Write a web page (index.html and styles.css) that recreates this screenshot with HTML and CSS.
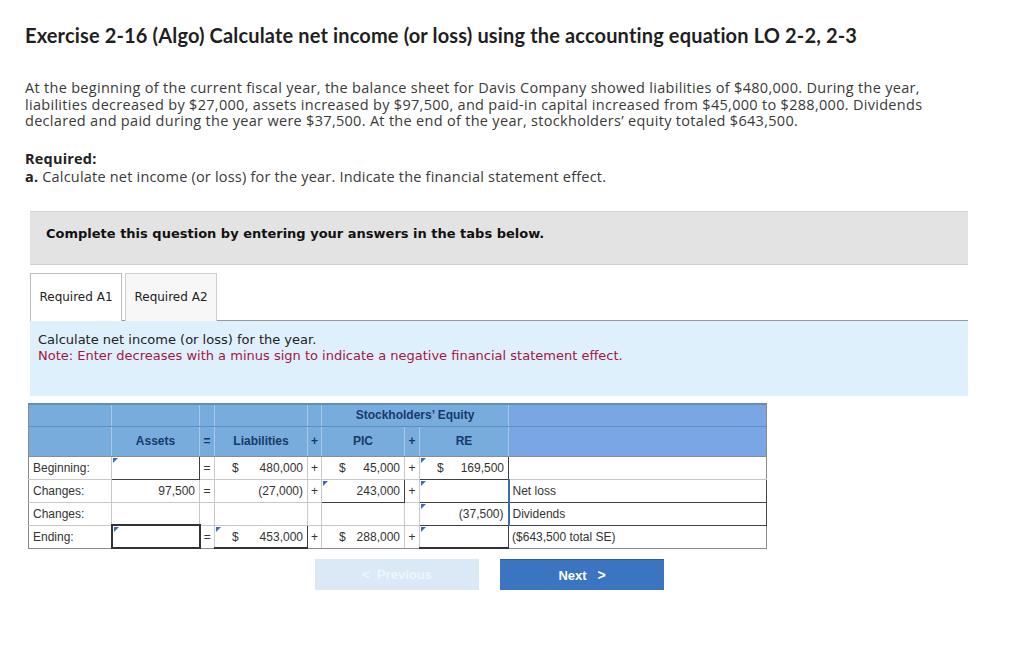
FILE: index.html
```html
<!DOCTYPE html>
<html>
<head>
<meta charset="utf-8">
<link rel="stylesheet" href="styles.css">
</head>
<body>
<div class="page">
  <h1 class="title">Exercise 2-16 (Algo) Calculate net income (or loss) using the accounting equation LO 2-2, 2-3</h1>
  <p class="intro">At the beginning of the current fiscal year, the balance sheet for Davis Company showed liabilities of $480,000. During the year,<br>liabilities decreased by $27,000, assets increased by $97,500, and paid-in capital increased from $45,000 to $288,000. Dividends<br>declared and paid during the year were $37,500. At the end of the year, stockholders’ equity totaled $643,500.</p>
  <p class="req"><b>Required:</b><br><b>a.</b> Calculate net income (or loss) for the year. Indicate the financial statement effect.</p>

  <div class="instr">Complete this question by entering your answers in the tabs below.</div>

  <div class="tabs">
    <div class="tab active">Required A1</div>
    <div class="tab">Required A2</div>
  </div>
  <div class="panel">
    <div class="panel-line">Calculate net income (or loss) for the year.</div>
    <div class="panel-note">Note: Enter decreases with a minus sign to indicate a negative financial statement effect.</div>
  </div>

  <table class="eq">
    <colgroup>
      <col style="width:83px"><col style="width:88px"><col style="width:15px"><col style="width:93px"><col style="width:14px"><col style="width:83px"><col style="width:15px"><col style="width:89px"><col style="width:258px">
    </colgroup>
    <tr class="h1">
      <th></th><th></th><th></th><th></th><th></th><th colspan="3">Stockholders’ Equity</th><th></th>
    </tr>
    <tr class="h2">
      <th></th><th>Assets</th><th>=</th><th>Liabilities</th><th>+</th><th>PIC</th><th>+</th><th>RE</th><th></th>
    </tr>
    <tr>
      <td class="lbl">Beginning:</td>
      <td class="inp"></td>
      <td class="op">=</td>
      <td><span class="money"><span>$</span><span>480,000</span></span></td>
      <td class="op">+</td>
      <td><span class="money"><span>$</span><span>45,000</span></span></td>
      <td class="op">+</td>
      <td class="inp"><span class="money"><span>$</span><span>169,500</span></span></td>
      <td class="note"></td>
    </tr>
    <tr>
      <td class="lbl">Changes:</td>
      <td class="num">97,500</td>
      <td class="op">=</td>
      <td class="num">(27,000)</td>
      <td class="op">+</td>
      <td class="inp num">243,000</td>
      <td class="op">+</td>
      <td class="inp"></td>
      <td class="note sel">Net loss</td>
    </tr>
    <tr>
      <td class="lbl">Changes:</td>
      <td></td>
      <td class="op"></td>
      <td></td>
      <td class="op"></td>
      <td></td>
      <td class="op"></td>
      <td class="inp num">(37,500)</td>
      <td class="note sel">Dividends</td>
    </tr>
    <tr class="end">
      <td class="lbl">Ending:</td>
      <td class="inp thick"></td>
      <td class="op">=</td>
      <td class="inp"><span class="money"><span>$</span><span>453,000</span></span></td>
      <td class="op">+</td>
      <td><span class="money"><span>$</span><span>288,000</span></span></td>
      <td class="op">+</td>
      <td class="inp"></td>
      <td class="note">($643,500 total SE)</td>
    </tr>
  </table>

  <div class="nav">
    <button class="btn prev">&lt;&nbsp; Previous</button>
    <button class="btn next">Next&nbsp;&nbsp; <span class="chev">&gt;</span></button>
  </div>
</div>
</body>
</html>
```

FILE: styles.css
```css
html, body {
  margin: 0;
  padding: 0;
  background: #ffffff;
}
.page {
  padding: 24px 0 0 25px;
  font-family: "Open Sans", "Liberation Sans", sans-serif;
  color: #333333;
}
.title {
  margin: 0;
  font-family: "Lato", "Open Sans", sans-serif;
  font-weight: 700;
  font-size: 20px;
  line-height: 22px;
  letter-spacing: 0.15px;
  color: #1f1f1f;
}
.intro {
  margin: 34px 0 0 0;
  font-size: 14.5px;
  line-height: 16.6px;
  color: #3a3a3a;
  letter-spacing: 0.3px;
}
.req {
  margin: 20px 0 0 0;
  font-size: 14.5px;
  line-height: 18px;
  color: #3a3a3a;
  letter-spacing: 0.2px;
}
.req b {
  color: #222;
}
.instr {
  margin: 25px 0 0 5px;
  width: 938px;
  height: 54px;
  box-sizing: border-box;
  padding: 14px 0 0 16px;
  background: #e3e3e3;
  border-top: 1px solid #d6d6d6;
  border-bottom: 1px solid #cfcfcf;
  font-family: "DejaVu Sans", Verdana, sans-serif;
  font-weight: 700;
  font-size: 13px;
  color: #111;
}
.tabs {
  display: flex;
  gap: 3px;
  margin: 8px 0 0 5px;
  width: 938px;
  height: 48px;
  box-sizing: border-box;
  border-bottom: 1px solid #999;
}
.tab {
  width: 92px;
  box-sizing: border-box;
  height: 48px;
  border: 1px solid #cfcfcf;
  border-bottom: none;
  background: #f7f7f7;
  font-family: "DejaVu Sans", Verdana, sans-serif;
  font-size: 12px;
  color: #222;
  display: flex;
  align-items: center;
  justify-content: center;
}
.tab.active {
  background: #ffffff;
  border-color: #bdbdbd;
  height: 48px;
  margin-bottom: -1px;
}
.panel {
  margin-left: 5px;
  width: 938px;
  height: 75px;
  box-sizing: border-box;
  padding: 11px 0 0 8px;
  background: #dff0fd;
  font-family: "DejaVu Sans", Verdana, sans-serif;
  font-size: 13px;
  line-height: 16px;
}
.panel-line {
  color: #222;
}
.panel-note {
  color: #a3173f;
}
.eq {
  margin: 7px 0 0 3px;
  border-collapse: collapse;
  table-layout: fixed;
  width: 738px;
  font-family: "Liberation Sans", Arial, sans-serif;
  font-size: 12px;
  color: #333;
}
.eq th {
  background: #78acdd;
  color: #173a6b;
  font-weight: 700;
  border-left: 1px solid #a9c8e6;
  border-right: 1px solid #a9c8e6;
  padding: 0;
  text-align: center;
}
.eq tr.h1 th {
  height: 21px;
  border-top: 2px solid #5e8fbf;
  border-bottom: 1px solid #5f8fc0;
}
.eq tr.h2 th {
  height: 29px;
  border-bottom: 1px solid #8c8c8c;
}
.eq th:first-child {
  border-left: 1px solid #8a8a8a;
}
.eq th:last-child {
  background: #7ba6e6;
  border-right: 1px solid #8a8a8a;
}
.eq td {
  height: 23px;
  padding: 0 4px;
  border: 1px solid #c8c8c8;
  box-sizing: border-box;
  position: relative;
  white-space: nowrap;
}
.eq td.lbl {
  padding-left: 4px;
  border-left: 1px solid #8a8a8a;
}
.eq td.num {
  text-align: right;
}
.eq td.op {
  text-align: center;
  padding: 0;
}
.money {
  display: flex;
  justify-content: space-between;
  padding-left: 13px;
}
.eq td.inp {
  border: 1px solid #3f3f3f;
}
.eq td.inp::before {
  content: "";
  position: absolute;
  left: 1px;
  top: 1px;
  border-top: 5px solid #3b6db5;
  border-right: 5px solid transparent;
}
.eq td.thick {
  border: 2px solid #333;
}
.eq td.note {
  border-right: 1px solid #8a8a8a;
  padding-left: 3px;
}
.eq td.sel {
  border: 1px solid #444;
  border-left: 2px solid #3b6db5;
}
.eq tr.end td {
  border-bottom: 1px solid #8a8a8a;
}
.eq tr.end td.inp {
  border-bottom: 2px solid #333;
}
.nav {
  display: flex;
  gap: 21px;
  margin: 10px 0 0 290px;
}
.btn {
  width: 164px;
  height: 31px;
  border: none;
  font-family: "Liberation Sans", Arial, sans-serif;
  font-weight: 700;
  font-size: 13px;
  padding: 0;
}
.prev {
  background: #dbe9f7;
  color: #eef5fc;
}
.next {
  background: #3b74c0;
  color: #ffffff;
  border-top: 1px solid #2d5e9e;
}
.chev {
  font-size: 14px;
}
```
